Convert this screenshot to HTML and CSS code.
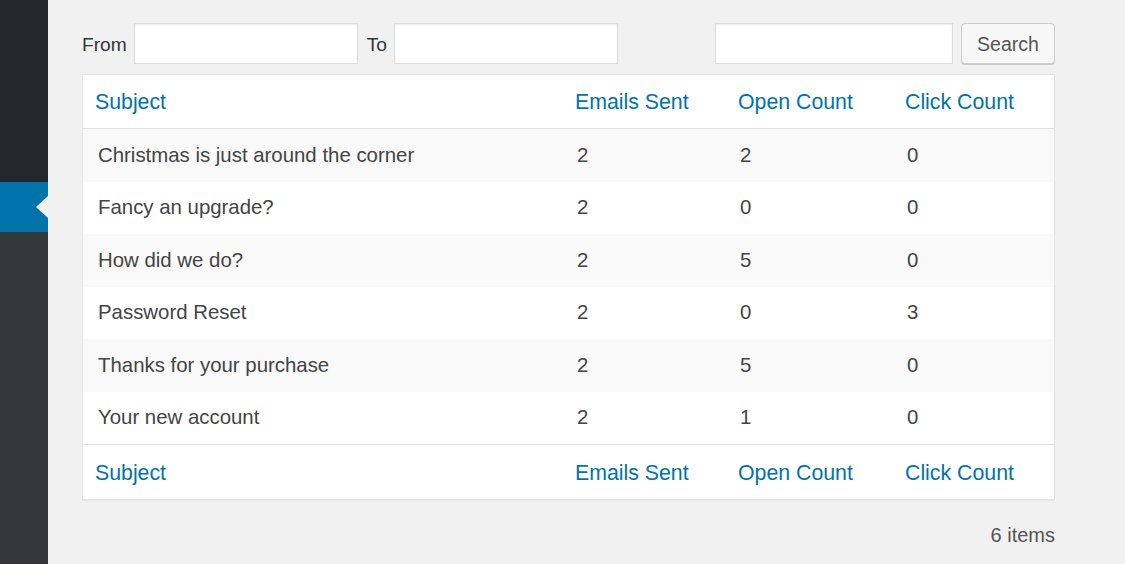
FILE: index.html
```html
<!DOCTYPE html>
<html lang="en">
<head>
<meta charset="utf-8">
<title>Email Tracking</title>
<link rel="stylesheet" href="styles.css">
</head>
<body>
<div class="layout">
  <aside class="sidebar">
    <div class="menu-top"></div>
    <div class="menu-current"></div>
    <div class="menu-rest"></div>
  </aside>
  <main class="content">
    <form class="filters">
      <label class="filter-label" for="from">From</label>
      <input class="text-input date-input" id="from" type="text">
      <label class="filter-label to-label" for="to">To</label>
      <input class="text-input date-input" id="to" type="text">
      <div class="search-box">
        <input class="text-input search-input" type="search">
        <button class="button" type="button">Search</button>
      </div>
    </form>
    <table class="list-table">
      <colgroup>
        <col class="col-subject">
        <col class="col-sent">
        <col class="col-open">
        <col class="col-click">
      </colgroup>
      <thead>
        <tr>
          <th><a href="#">Subject</a></th>
          <th><a href="#">Emails Sent</a></th>
          <th><a href="#">Open Count</a></th>
          <th><a href="#">Click Count</a></th>
        </tr>
      </thead>
      <tbody>
        <tr class="alt"><td>Christmas is just around the corner</td><td>2</td><td>2</td><td>0</td></tr>
        <tr><td>Fancy an upgrade?</td><td>2</td><td>0</td><td>0</td></tr>
        <tr class="alt"><td>How did we do?</td><td>2</td><td>5</td><td>0</td></tr>
        <tr><td>Password Reset</td><td>2</td><td>0</td><td>3</td></tr>
        <tr class="alt"><td>Thanks for your purchase</td><td>2</td><td>5</td><td>0</td></tr>
        <tr><td>Your new account</td><td>2</td><td>1</td><td>0</td></tr>
      </tbody>
      <tfoot>
        <tr>
          <th><a href="#">Subject</a></th>
          <th><a href="#">Emails Sent</a></th>
          <th><a href="#">Open Count</a></th>
          <th><a href="#">Click Count</a></th>
        </tr>
      </tfoot>
    </table>
    <div class="item-count">6 items</div>
  </main>
</div>
</body>
</html>
```
FILE: styles.css
```css
html, body {
  margin: 0;
  padding: 0;
  height: 100%;
  background: #f1f1f1;
  font-family: "Liberation Sans", Arial, sans-serif;
  color: #444;
}

.layout {
  display: flex;
  min-height: 564px;
}

.sidebar {
  width: 48px;
  flex: 0 0 48px;
  display: flex;
  flex-direction: column;
  background: #32373c;
}

.menu-top {
  height: 182px;
  background: #23282d;
}

.menu-current {
  position: relative;
  height: 50px;
  background: #0073aa;
}

.menu-current::after {
  content: "";
  position: absolute;
  right: 0;
  top: 50%;
  margin-top: -11px;
  border-style: solid;
  border-width: 11px 12px 11px 0;
  border-color: transparent #f1f1f1 transparent transparent;
}

.menu-rest {
  flex: 1;
  background: #32373c;
}

.content {
  width: 973px;
  padding: 23px 0 0 34px;
}

.filters {
  display: flex;
  align-items: center;
  height: 42px;
  margin: 0;
}

.filter-label {
  font-size: 19.2px;
  color: #32373c;
  margin-right: 7px;
  padding-top: 2px;
}

.to-label {
  margin-left: 9px;
  margin-right: 7px;
}

.text-input {
  box-sizing: border-box;
  height: 41px;
  border: 1px solid #ddd;
  background: #fff;
  box-shadow: inset 0 1px 2px rgba(0, 0, 0, 0.07);
  margin: 0;
  padding: 0 8px;
  font-size: 19px;
  align-self: flex-start;
}

.date-input {
  width: 224px;
}

.search-box {
  margin-left: auto;
  display: flex;
  align-items: flex-start;
  align-self: flex-start;
}

.search-input {
  width: 238px;
}

.button {
  box-sizing: border-box;
  width: 94px;
  height: 41px;
  margin-left: 8px;
  background: #f7f7f7;
  border: 1px solid #ccc;
  border-radius: 4px;
  box-shadow: 0 1px 0 #ccc;
  color: #555;
  font-family: "Liberation Sans", Arial, sans-serif;
  font-size: 19.5px;
  padding: 2px 0 0;
}

.list-table {
  box-sizing: border-box;
  width: 973px;
  margin-top: 9px;
  border: 1px solid #e5e5e5;
  border-spacing: 0;
  table-layout: fixed;
  background: #fff;
  box-shadow: 0 1px 1px rgba(0, 0, 0, 0.04);
}

.col-subject { width: 480px; }
.col-sent { width: 163px; }
.col-open { width: 167px; }
.col-click { width: 161px; }

.list-table th {
  padding: 2px 0 0 12px;
  box-sizing: border-box;
  text-align: left;
  font-weight: normal;
  font-size: 21.3px;
}

.list-table thead th {
  height: 54px;
  border-bottom: 1px solid #e1e1e1;
}

.list-table tfoot th {
  height: 55px;
  border-top: 1px solid #e1e1e1;
  padding-top: 3px;
}

.list-table th a {
  color: #0073aa;
  text-decoration: none;
}

.list-table td {
  height: 52.5px;
  padding: 0 0 0 15px;
  font-size: 20.4px;
  color: #444;
  vertical-align: middle;
}

.list-table td + td {
  padding-left: 14px;
}

.list-table tr.alt td {
  background: #f9f9f9;
}

.item-count {
  text-align: right;
  font-size: 20px;
  line-height: 24px;
  margin-top: 23px;
  color: #555;
}
```
